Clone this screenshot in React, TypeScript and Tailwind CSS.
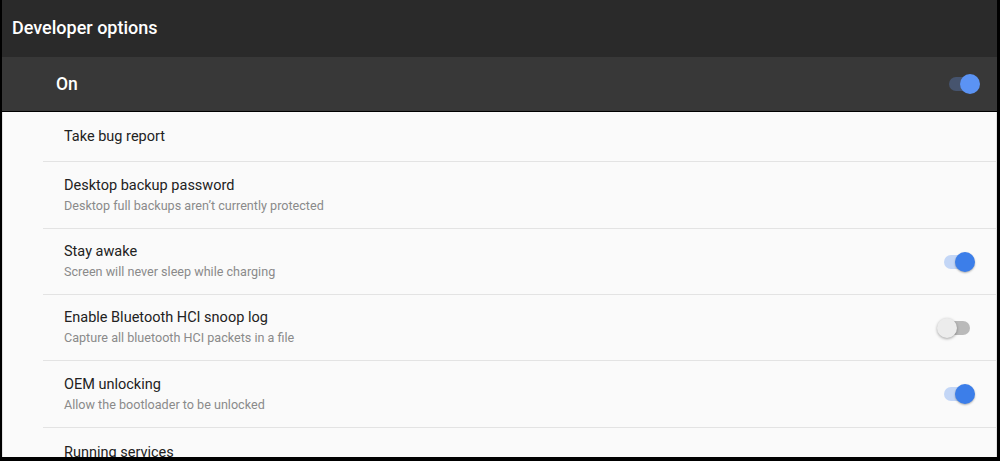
import React from 'react';

type Item = { title: string; summary?: string; toggle?: 'on' | 'off'; h: string };

const items: Item[] = [
  { title: 'Take bug report', h: 'h-[50px]' },
  { title: 'Desktop backup password', summary: 'Desktop full backups aren\u2019t currently protected', h: 'h-[67px]' },
  { title: 'Stay awake', summary: 'Screen will never sleep while charging', toggle: 'on', h: 'h-[66px]' },
  {
    title: 'Enable Bluetooth HCI snoop log',
    summary: 'Capture all bluetooth HCI packets in a file',
    toggle: 'off',
    h: 'h-[66px]',
  },
  { title: 'OEM unlocking', summary: 'Allow the bootloader to be unlocked', toggle: 'on', h: 'h-[67px]' },
  { title: 'Running services', h: 'h-[50px]' },
];

const Switch: React.FC<{ on: boolean; dark?: boolean }> = ({ on, dark }) => {
  const track = dark ? 'bg-[#46546e]' : on ? 'bg-[#c3d6f6]' : 'bg-[#bababa]';
  const thumb = dark
    ? 'bg-[#5b93f4]'
    : on
    ? 'bg-[#3c7ee9] shadow-[0_1px_2px_rgba(0,0,0,0.3)]'
    : 'bg-[#ececec] shadow-[0_1px_3px_rgba(0,0,0,0.35)]';
  return (
    <div className="relative w-[31px] h-[20px] shrink-0">
      <div className={`absolute left-0 top-[3px] w-[26px] h-[14px] rounded-full ${track}`} />
      <div
        className={`absolute top-0 w-[20px] h-[20px] rounded-full ${thumb} ${on ? 'right-0' : 'left-[-7px]'}`}
      />
    </div>
  );
};

const App: React.FC = () => {
  return (
    <div
      className="w-[1000px] h-[461px] overflow-hidden bg-black border-l-2 border-r-[3px] border-b-4 border-black flex flex-col"
      style={{ fontFamily: 'Roboto, "Noto Sans", sans-serif' }}
    >
      <header className="h-[57px] shrink-0 bg-[#2a2a2a] flex items-center pl-[10px]">
        <h1 className="text-white text-[18px] font-medium -mt-[3px]">Developer options</h1>
      </header>

      <div className="h-[54px] shrink-0 bg-[#383838] flex items-center justify-between pl-[54px] pr-[17px]">
        <span className="text-white text-[17.5px] font-medium">On</span>
        <Switch on dark />
      </div>

      <div className="h-[1px] shrink-0 bg-black" />

      <div className="flex-1 bg-[#fafafa] border-l border-r border-b border-[#e2e2e2]">
        {items.map((it, i) => (
          <div key={i} className="pl-[40px]">
            <div
              className={`flex items-center justify-between pl-[21px] pr-[21px] ${it.h} ${
                i < items.length - 1 ? 'border-b border-[#e3e3e3]' : ''
              }`}
            >
              <div className="flex flex-col">
                <span className="text-[14.5px] leading-[18px] text-[#222222]">{it.title}</span>
                {it.summary && (
                  <span className="text-[12.6px] leading-[16px] text-[#8a8a8a] mt-[3px]">{it.summary}</span>
                )}
              </div>
              {it.toggle && <Switch on={it.toggle === 'on'} />}
            </div>
          </div>
        ))}
      </div>
    </div>
  );
};

export default App;
